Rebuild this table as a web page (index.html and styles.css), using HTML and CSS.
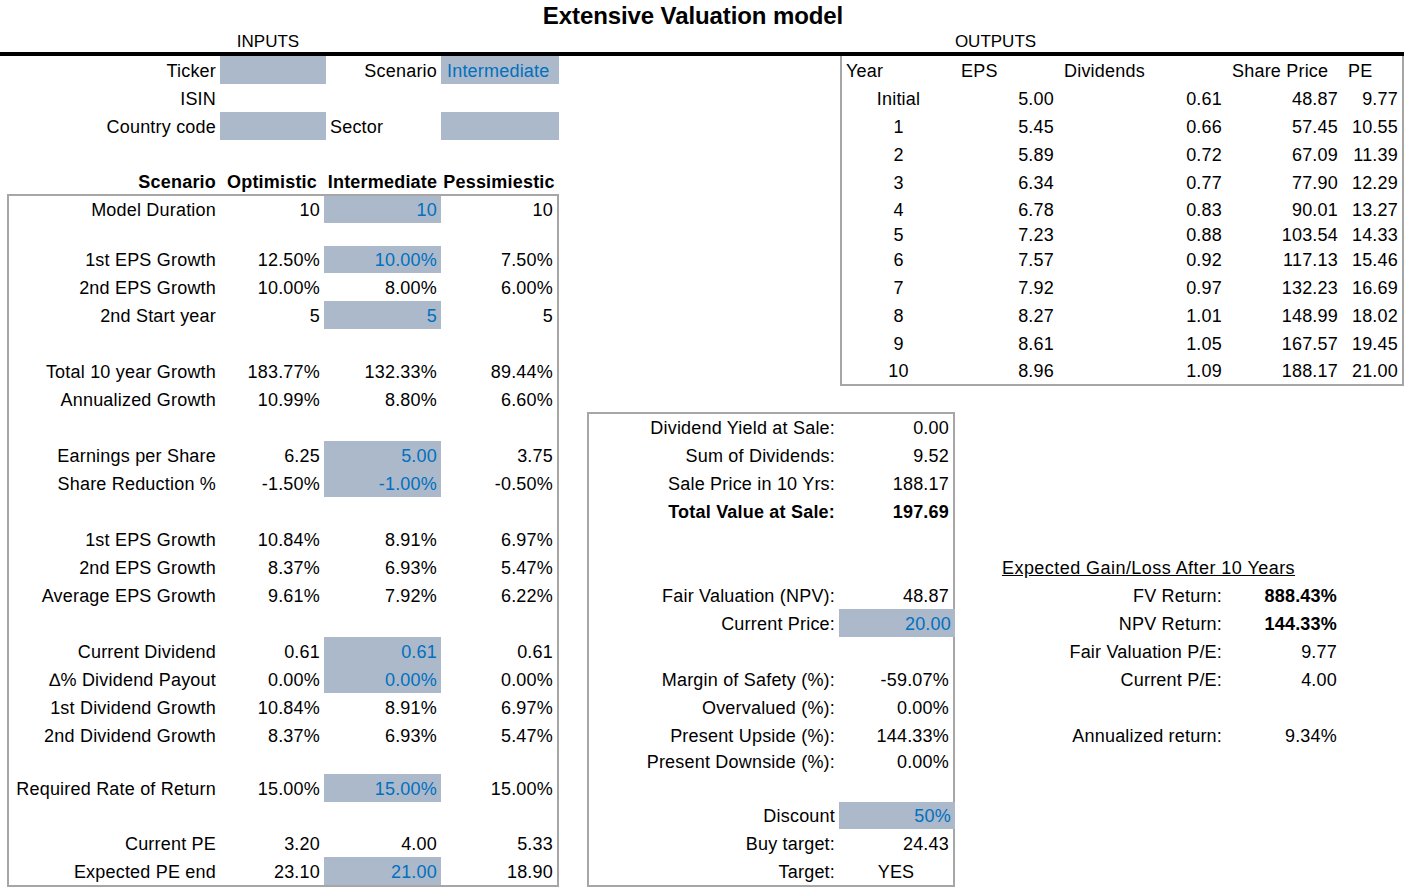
FILE: index.html
```html
<!DOCTYPE html>
<html lang="en">

<head>
    <meta charset="UTF-8">
    <meta name="viewport" content="width=device-width, initial-scale=1.0">
    <title>Extensive Valuation model</title>
    <link rel="stylesheet" href="styles.css">
</head>

<body>
    <div class="sheet">
        <h1 class="title">Extensive Valuation model</h1>
        <div class="sections">
            <span>INPUTS</span>
            <span></span>
            <span>OUTPUTS</span>
        </div>

        <div class="body">
            <!-- inputs -->
            <div class="inputs">
                <div class="top">
                    <div class="row">
                        <div class="c r">Ticker</div>
                        <div class="c in wide"></div>
                        <div class="c r">Scenario</div>
                        <div class="c in wide">Intermediate</div>
                    </div>
                    <div class="row">
                        <div class="c r">ISIN</div>
                    </div>
                    <div class="row">
                        <div class="c r">Country code</div>
                        <div class="c in wide"></div>
                        <div class="c pl">Sector</div>
                        <div class="c in wide"></div>
                    </div>
                    <div class="row"></div>
                    <div class="row h26 b">
                        <div class="c r">Scenario</div>
                        <div class="c ctr">Optimistic</div>
                        <div class="c ctr">Intermediate</div>
                        <div class="c ctr">Pessimiestic</div>
                    </div>
                </div>

                <div class="box">
                    <div class="row h27">
                        <div class="c r">Model Duration</div>
                        <div class="c r">10</div>
                        <div class="c r in">10</div>
                        <div class="c r">10</div>
                    </div>
                    <div class="row h23"></div>
                    <div class="row h27">
                        <div class="c r">1st EPS Growth</div>
                        <div class="c r">12.50%</div>
                        <div class="c r in">10.00%</div>
                        <div class="c r">7.50%</div>
                    </div>
                    <div class="row">
                        <div class="c r">2nd EPS Growth</div>
                        <div class="c r">10.00%</div>
                        <div class="c r">8.00%</div>
                        <div class="c r">6.00%</div>
                    </div>
                    <div class="row">
                        <div class="c r">2nd Start year</div>
                        <div class="c r">5</div>
                        <div class="c r in">5</div>
                        <div class="c r">5</div>
                    </div>
                    <div class="row"></div>
                    <div class="row">
                        <div class="c r">Total 10 year Growth</div>
                        <div class="c r">183.77%</div>
                        <div class="c r">132.33%</div>
                        <div class="c r">89.44%</div>
                    </div>
                    <div class="row">
                        <div class="c r">Annualized Growth</div>
                        <div class="c r">10.99%</div>
                        <div class="c r">8.80%</div>
                        <div class="c r">6.60%</div>
                    </div>
                    <div class="row"></div>
                    <div class="row">
                        <div class="c r">Earnings per Share</div>
                        <div class="c r">6.25</div>
                        <div class="c r in">5.00</div>
                        <div class="c r">3.75</div>
                    </div>
                    <div class="row">
                        <div class="c r">Share Reduction %</div>
                        <div class="c r">-1.50%</div>
                        <div class="c r in">-1.00%</div>
                        <div class="c r">-0.50%</div>
                    </div>
                    <div class="row"></div>
                    <div class="row">
                        <div class="c r">1st EPS Growth</div>
                        <div class="c r">10.84%</div>
                        <div class="c r">8.91%</div>
                        <div class="c r">6.97%</div>
                    </div>
                    <div class="row">
                        <div class="c r">2nd EPS Growth</div>
                        <div class="c r">8.37%</div>
                        <div class="c r">6.93%</div>
                        <div class="c r">5.47%</div>
                    </div>
                    <div class="row">
                        <div class="c r">Average EPS Growth</div>
                        <div class="c r">9.61%</div>
                        <div class="c r">7.92%</div>
                        <div class="c r">6.22%</div>
                    </div>
                    <div class="row"></div>
                    <div class="row">
                        <div class="c r">Current Dividend</div>
                        <div class="c r">0.61</div>
                        <div class="c r in">0.61</div>
                        <div class="c r">0.61</div>
                    </div>
                    <div class="row">
                        <div class="c r">&#8710;% Dividend Payout</div>
                        <div class="c r">0.00%</div>
                        <div class="c r in">0.00%</div>
                        <div class="c r">0.00%</div>
                    </div>
                    <div class="row">
                        <div class="c r">1st Dividend Growth</div>
                        <div class="c r">10.84%</div>
                        <div class="c r">8.91%</div>
                        <div class="c r">6.97%</div>
                    </div>
                    <div class="row">
                        <div class="c r">2nd Dividend Growth</div>
                        <div class="c r">8.37%</div>
                        <div class="c r">6.93%</div>
                        <div class="c r">5.47%</div>
                    </div>
                    <div class="row h25"></div>
                    <div class="row">
                        <div class="c r">Required Rate of Return</div>
                        <div class="c r">15.00%</div>
                        <div class="c r in">15.00%</div>
                        <div class="c r">15.00%</div>
                    </div>
                    <div class="row h27"></div>
                    <div class="row">
                        <div class="c r">Current PE</div>
                        <div class="c r">3.20</div>
                        <div class="c r">4.00</div>
                        <div class="c r">5.33</div>
                    </div>
                    <div class="row">
                        <div class="c r">Expected PE end</div>
                        <div class="c r">23.10</div>
                        <div class="c r in">21.00</div>
                        <div class="c r">18.90</div>
                    </div>
                </div>
            </div>

            <!-- outputs -->
            <div class="outputs">
                <div class="years">
                    <div class="row head">
                        <div class="c">Year</div>
                        <div class="c">EPS</div>
                        <div class="c">Dividends</div>
                        <div class="c">Share Price</div>
                        <div class="c">PE</div>
                    </div>
                    <div class="row">
                        <div class="c ctr">Initial</div>
                        <div class="c r">5.00</div>
                        <div class="c r">0.61</div>
                        <div class="c r">48.87</div>
                        <div class="c r">9.77</div>
                    </div>
                    <div class="row">
                        <div class="c ctr">1</div>
                        <div class="c r">5.45</div>
                        <div class="c r">0.66</div>
                        <div class="c r">57.45</div>
                        <div class="c r">10.55</div>
                    </div>
                    <div class="row">
                        <div class="c ctr">2</div>
                        <div class="c r">5.89</div>
                        <div class="c r">0.72</div>
                        <div class="c r">67.09</div>
                        <div class="c r">11.39</div>
                    </div>
                    <div class="row">
                        <div class="c ctr">3</div>
                        <div class="c r">6.34</div>
                        <div class="c r">0.77</div>
                        <div class="c r">77.90</div>
                        <div class="c r">12.29</div>
                    </div>
                    <div class="row h27">
                        <div class="c ctr">4</div>
                        <div class="c r">6.78</div>
                        <div class="c r">0.83</div>
                        <div class="c r">90.01</div>
                        <div class="c r">13.27</div>
                    </div>
                    <div class="row h23">
                        <div class="c ctr">5</div>
                        <div class="c r">7.23</div>
                        <div class="c r">0.88</div>
                        <div class="c r">103.54</div>
                        <div class="c r">14.33</div>
                    </div>
                    <div class="row h27">
                        <div class="c ctr">6</div>
                        <div class="c r">7.57</div>
                        <div class="c r">0.92</div>
                        <div class="c r">117.13</div>
                        <div class="c r">15.46</div>
                    </div>
                    <div class="row">
                        <div class="c ctr">7</div>
                        <div class="c r">7.92</div>
                        <div class="c r">0.97</div>
                        <div class="c r">132.23</div>
                        <div class="c r">16.69</div>
                    </div>
                    <div class="row">
                        <div class="c ctr">8</div>
                        <div class="c r">8.27</div>
                        <div class="c r">1.01</div>
                        <div class="c r">148.99</div>
                        <div class="c r">18.02</div>
                    </div>
                    <div class="row">
                        <div class="c ctr">9</div>
                        <div class="c r">8.61</div>
                        <div class="c r">1.05</div>
                        <div class="c r">167.57</div>
                        <div class="c r">19.45</div>
                    </div>
                    <div class="row h27">
                        <div class="c ctr">10</div>
                        <div class="c r">8.96</div>
                        <div class="c r">1.09</div>
                        <div class="c r">188.17</div>
                        <div class="c r">21.00</div>
                    </div>
                </div>

                <div class="lower">
                    <div class="summary">
                        <div class="row h27">
                            <div class="c r">Dividend Yield at Sale:</div>
                            <div class="c r">0.00</div>
                        </div>
                        <div class="row">
                            <div class="c r">Sum of Dividends:</div>
                            <div class="c r">9.52</div>
                        </div>
                        <div class="row">
                            <div class="c r">Sale Price in 10 Yrs:</div>
                            <div class="c r">188.17</div>
                        </div>
                        <div class="row b">
                            <div class="c r">Total Value at Sale:</div>
                            <div class="c r">197.69</div>
                        </div>
                        <div class="row"></div>
                        <div class="row"></div>
                        <div class="row">
                            <div class="c r">Fair Valuation (NPV):</div>
                            <div class="c r">48.87</div>
                        </div>
                        <div class="row">
                            <div class="c r">Current Price:</div>
                            <div class="c r in">20.00</div>
                        </div>
                        <div class="row"></div>
                        <div class="row">
                            <div class="c r">Margin of Safety (%):</div>
                            <div class="c r">-59.07%</div>
                        </div>
                        <div class="row">
                            <div class="c r">Overvalued (%):</div>
                            <div class="c r">0.00%</div>
                        </div>
                        <div class="row">
                            <div class="c r">Present Upside (%):</div>
                            <div class="c r">144.33%</div>
                        </div>
                        <div class="row h25">
                            <div class="c r">Present Downside (%):</div>
                            <div class="c r">0.00%</div>
                        </div>
                        <div class="row"></div>
                        <div class="row h27">
                            <div class="c r">Discount</div>
                            <div class="c r in">50%</div>
                        </div>
                        <div class="row">
                            <div class="c r">Buy target:</div>
                            <div class="c r">24.43</div>
                        </div>
                        <div class="row">
                            <div class="c r">Target:</div>
                            <div class="c ctr">YES</div>
                        </div>
                    </div>

                    <div class="returns">
                        <div class="row h27"></div>
                        <div class="row"></div>
                        <div class="row"></div>
                        <div class="row"></div>
                        <div class="row"></div>
                        <div class="row">
                            <div class="c gain">Expected Gain/Loss After 10 Years</div>
                        </div>
                        <div class="row">
                            <div class="c r">FV Return:</div>
                            <div class="c r b">888.43%</div>
                        </div>
                        <div class="row">
                            <div class="c r">NPV Return:</div>
                            <div class="c r b">144.33%</div>
                        </div>
                        <div class="row">
                            <div class="c r">Fair Valuation P/E:</div>
                            <div class="c r">9.77</div>
                        </div>
                        <div class="row">
                            <div class="c r">Current P/E:</div>
                            <div class="c r">4.00</div>
                        </div>
                        <div class="row"></div>
                        <div class="row">
                            <div class="c r">Annualized return:</div>
                            <div class="c r">9.34%</div>
                        </div>
                    </div>
                </div>
            </div>
        </div>
    </div>
</body>

</html>
```

FILE: styles.css
```css
body {
    margin: 0;
    padding: 0;
    background: #fff;
    color: #000;
    font-family: "Liberation Sans", Arial, sans-serif;
    font-size: 18px;
    letter-spacing: 0.2px;
}

.sheet {
    width: 1404px;
}

.title {
    margin: 0;
    height: 30px;
    padding: 1px 18px 0 0;
    box-sizing: border-box;
    font-size: 24px;
    line-height: 30px;
    letter-spacing: -0.1px;
    text-align: center;
}

.sections {
    display: grid;
    grid-template-columns: 536px 51px 1fr;
    height: 22px;
    line-height: 24px;
    font-size: 17px;
    letter-spacing: 0;
    text-align: center;
    border-bottom: 4px solid #000;
}

.body {
    display: flex;
    align-items: flex-start;
}

/* rows and cells */
.row {
    display: grid;
    height: 28px;
}

.h27 { height: 27px; }
.h26 { height: 26px; }
.h25 { height: 25px; }
.h23 { height: 23px; }

.c {
    display: flex;
    align-items: center;
    padding: 2px 4px 0;
    white-space: nowrap;
}

.r {
    justify-content: flex-end;
}

.ctr {
    justify-content: center;
}

.b {
    font-weight: bold;
}

.in {
    background: #acb9ca;
    color: #0070c0;
}

/* inputs */
.inputs {
    width: 587px;
    flex: none;
}

.inputs .row {
    grid-template-columns: 211px 104px 117px 116px;
}

.top {
    padding-left: 9px;
}

.top .in {
    padding-left: 6px;
}

.top .wide {
    margin-right: -2px;
}

.pl {
    padding-left: 6px;
}

.box {
    margin-left: 7px;
    width: 548px;
    border: 2px solid #a6a6a6;
}

/* outputs */
.outputs {
    flex: 1;
}

.years {
    margin-left: 253px;
    border: 2px solid #a6a6a6;
    border-top: none;
}

.years .row {
    grid-template-columns: 113px 103px 168px 116px 60px;
}

.years .head .c {
    padding-left: 6px;
}

.years .head .c:first-child {
    padding-left: 4px;
}

.lower {
    display: flex;
    align-items: flex-start;
    margin-top: 26px;
}

.summary {
    width: 364px;
    flex: none;
    border: 2px solid #a6a6a6;
}

.summary .row {
    grid-template-columns: 250px 114px;
}

.summary .in {
    margin-right: -2px;
}

.returns {
    flex: 1;
    padding-top: 2px;
}

.returns .row {
    grid-template-columns: 271px 116px;
}

.returns .c:last-child {
    padding-right: 5px;
}

.gain {
    grid-column: 1 / 3;
    padding-left: 47px;
    letter-spacing: 0.45px;
    text-decoration: underline;
}
```
